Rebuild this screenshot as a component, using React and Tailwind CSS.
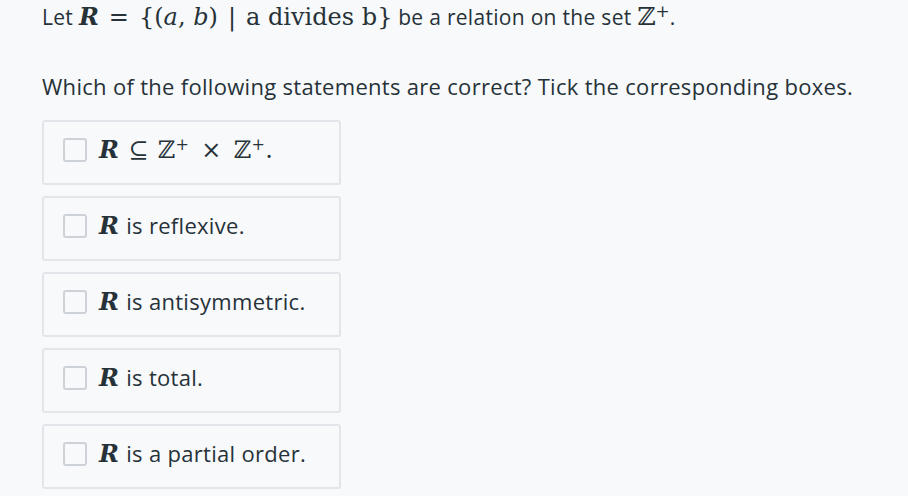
import React from "react";

function R() {
  return (
    <span className="italic font-bold text-[24px] leading-none mr-[7px] font-['DejaVu_Serif',serif]">
      R
    </span>
  );
}

function Card({ children }) {
  return (
    <div className="w-[299px] h-[65px] border-2 border-[#e2e5e9] rounded-[3px] bg-[#f8f9fb] flex items-center pl-[19px]">
      <div className="w-[24px] h-[24px] border-2 border-[#cdd2d8] rounded-[3px] shrink-0 -mt-[6px]" />
      <div className="ml-[12px] flex items-baseline text-[22px] text-[#263238] -mt-[6px]">{children}</div>
    </div>
  );
}

export default function App() {
  return (
    <div className="w-[908px] h-[496px] bg-[#f8f9fb] text-[#263238] pl-[42px] overflow-hidden font-['Open_Sans',sans-serif] tracking-[0.3px]">
      <div className="h-[34px] flex items-baseline text-[21px] tracking-normal -mt-[2px]">
        <span className="tracking-[0.3px]">Let&nbsp;</span>
        <span className="italic font-bold text-[24px] font-['DejaVu_Serif',serif]">R</span>
        <span className="text-[24px] mx-[10px] font-['DejaVu_Serif',serif]">=</span>
        <span className="text-[24px] font-['DejaVu_Serif',serif]">
          {"{("}
          <span className="italic">a</span>
          {", "}
          <span className="italic">b</span>
          {")"}
        </span>
        <span className="text-[24px] mx-[10px] font-['DejaVu_Serif',serif]">|</span>
        <span className="text-[24px] font-['DejaVu_Serif',serif]">a divides b{"}"}</span>
        <span className="tracking-[0.3px]">&nbsp;be a relation on the set&nbsp;</span>
        <span className="text-[25px] font-['DejaVu_Serif',serif]">ℤ</span>
        <sup className="text-[17px] font-['DejaVu_Serif',serif]">+</sup>
        <span>.</span>
      </div>
      <div className="mt-[39px] text-[22px] leading-[30px]">
        Which of the following statements are correct? Tick the corresponding boxes.
      </div>
      <div className="mt-[19px] flex flex-col gap-[11px]">
        <Card>
          <span className="italic font-bold text-[24px] font-['DejaVu_Serif',serif]">R</span>
          <span className="text-[24px] mx-[9px] font-['DejaVu_Serif',serif]">⊆</span>
          <span className="text-[24px] font-['DejaVu_Serif',serif]">ℤ</span>
          <sup className="text-[16px] font-['DejaVu_Serif',serif]">+</sup>
          <span className="text-[24px] mx-[12px] font-['DejaVu_Serif',serif]">×</span>
          <span className="text-[24px] font-['DejaVu_Serif',serif]">ℤ</span>
          <sup className="text-[16px] font-['DejaVu_Serif',serif]">+</sup>
          <span className="text-[24px] font-['DejaVu_Serif',serif]">.</span>
        </Card>
        <Card><R /><span>is reflexive.</span></Card>
        <Card><R /><span>is antisymmetric.</span></Card>
        <Card><R /><span>is total.</span></Card>
        <Card><R /><span>is a partial order.</span></Card>
      </div>
    </div>
  );
}
